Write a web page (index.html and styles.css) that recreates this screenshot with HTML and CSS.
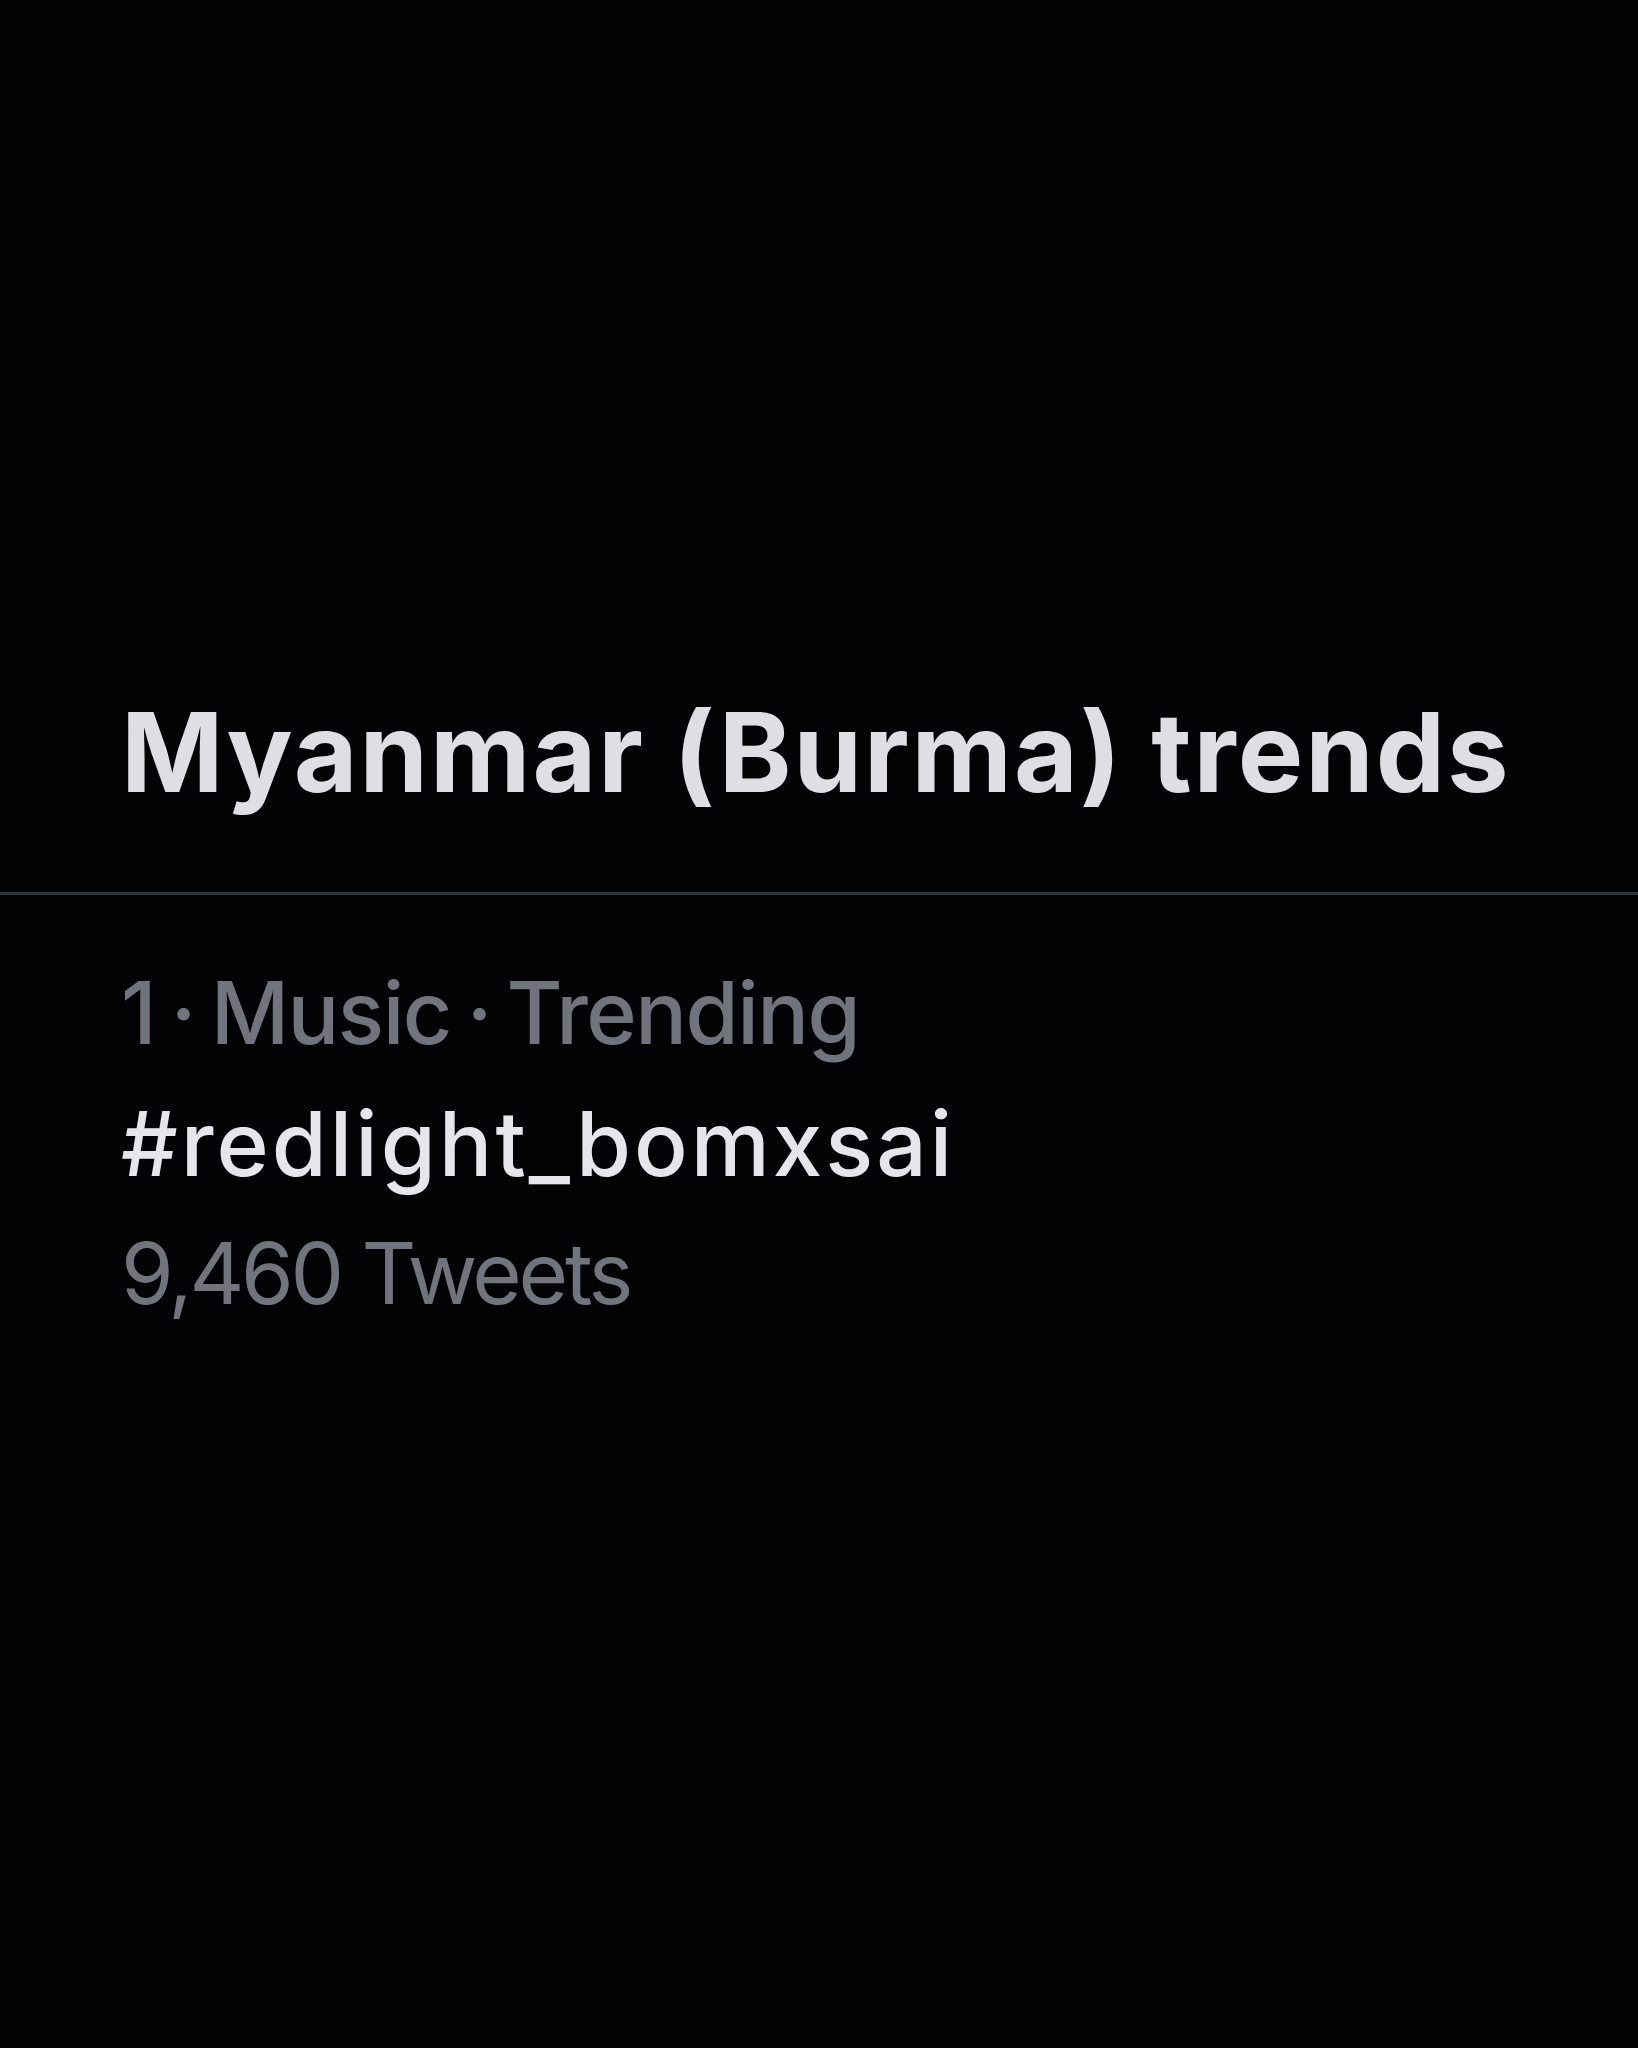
FILE: index.html
```html
<!DOCTYPE html>
<html lang="en">
<head>
    <meta charset="UTF-8">
    <meta name="viewport" content="width=device-width, initial-scale=1.0">
    <title>Myanmar (Burma) trends</title>
    <link rel="stylesheet" href="styles.css">
</head>
<body>
    <div class="screen">
        <div class="header">
            <h1 class="title">Myanmar (Burma) trends</h1>
        </div>
        <div class="divider"></div>
        <div class="trend">
            <div class="meta">1 · Music · Trending</div>
            <div class="tag">#redlight_bomxsai</div>
            <div class="count">9,460 Tweets</div>
        </div>
    </div>
</body>
</html>
```

FILE: styles.css
```css
body {
    margin: 0;
    padding: 0;
    background: #030305;
    font-family: Inter, "Noto Sans", sans-serif;
    color: #e3e3e8;
}
.screen {
    width: 1638px;
    height: 2048px;
    background: #030305;
}
.header {
    padding: 686px 0 0 121px;
}
.title {
    margin: 0 0 74px 0;
    font-size: 110px;
    line-height: 132px;
    font-weight: 700;
    letter-spacing: 2px;
    color: #dedee3;
}
.divider {
    height: 3px;
    background: #33333b;
}
.trend {
    padding: 53px 0 0 121px;
}
.meta {
    font-size: 86px;
    line-height: 130px;
    font-weight: 500;
    letter-spacing: -1.5px;
    word-spacing: -6px;
    color: #71737d;
}
.tag {
    font-size: 89px;
    line-height: 132px;
    font-weight: 500;
    letter-spacing: 3px;
    color: #e6e6ea;
}
.count {
    font-size: 85px;
    line-height: 128px;
    font-weight: 400;
    letter-spacing: -3.3px;
    color: #71737d;
}
```
